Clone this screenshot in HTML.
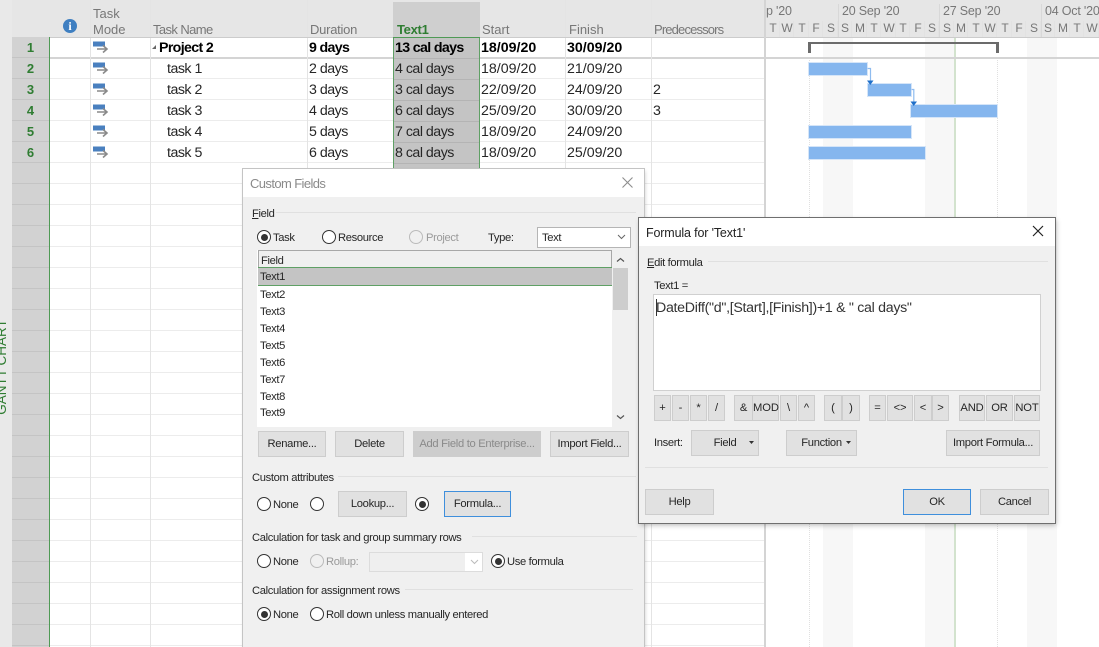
<!DOCTYPE html>
<html><head><meta charset="utf-8"><style>
html,body{margin:0;padding:0}
body{width:1099px;height:647px;overflow:hidden;position:relative;background:#fff;font-family:"Liberation Sans",sans-serif;color:#222;filter:blur(.3px)}
div,span{position:absolute;white-space:nowrap}
.h{font-size:13px;color:#777;line-height:15px}
.n{font-size:13px;font-weight:bold;color:#2f7d32;width:37px;text-align:center;left:12px;line-height:16px;margin-top:1px}
.g{font-size:14.2px;line-height:18px;color:#262626;margin-top:1px}
.x{letter-spacing:-.5px}
.b{font-weight:bold;color:#000}
.bx{letter-spacing:-.65px}
.d{font-size:12px;color:#777;top:21px;line-height:15px;width:14px;text-align:center}
.bar{background:#85b6ee;height:12px;box-shadow:0 0 0 1px #d5e5f8}
.l{font-size:11.2px;letter-spacing:-.35px;line-height:14px;color:#262626}
.gr{color:#9a9a9a}
.btn{background:#e1e1e1;border:1px solid #cdcdcd;box-sizing:border-box;font-size:11.2px;letter-spacing:-.3px;text-align:center;color:#262626}
.r{width:14px;height:14px;border:1px solid #333;border-radius:50%;background:#fff;box-sizing:border-box}
.r.on:after{content:"";position:absolute;left:2.500px;top:2.500px;width:7px;height:7px;border-radius:50%;background:#333}
.r.off{border-color:#bbb;background:#f0f0f0}
.sep{height:1px;background:#e0e0e0}
.m{top:395px;height:26px;line-height:24px;letter-spacing:-.1px}
</style></head><body>
<div style="left:0;top:0;width:1099px;height:37px;background:#e6e6e6"></div>
<div style="left:0;top:0;width:12px;height:647px;background:#e9e9e9"></div>
<div style="left:12px;top:37px;width:37px;height:610px;background:repeating-linear-gradient(#d2d2d2 0 20px,#c4c4c4 20px 21px)"></div>
<div style="left:49px;top:37px;width:1px;height:610px;background:#4f9a55"></div>
<div style="left:-48px;top:360px;width:100px;line-height:14px;height:14px;transform:rotate(-90deg);font-size:13.500px;color:#2f7d32;text-align:center">GANTT CHART</div>

<!-- grid rows -->
<div style="left:50px;top:37px;width:714px;height:610px;background:repeating-linear-gradient(#fff 0 20px,#ececec 20px 21px)"></div>
<div style="left:50px;top:57px;width:714px;height:2px;background:#d4d4d4"></div>
<div style="left:90px;top:0;width:1px;height:647px;background:#e4e4e4"></div>
<div style="left:150px;top:0;width:1px;height:647px;background:#e4e4e4"></div>
<div style="left:307px;top:0;width:1px;height:647px;background:#e4e4e4"></div>
<div style="left:565px;top:0;width:1px;height:647px;background:#e4e4e4"></div>
<div style="left:651px;top:0;width:1px;height:647px;background:#e4e4e4"></div>
<div style="left:50px;top:37px;width:714px;height:1px;background:#cccccc"></div>
<div style="left:393px;top:2px;width:87px;height:35px;background:#cfcfcf"></div>
<div style="left:393px;top:37px;width:87px;height:133px;background:repeating-linear-gradient(#c4c4c4 0 20px,#b4b4b4 20px 21px);box-sizing:border-box;border:1px solid #5fa065;border-bottom:0"></div>
<div style="left:393px;top:37px;width:87px;height:1px;background:#4f9a55"></div>

<!-- header -->
<div style="left:63px;top:19px;width:14px;height:14px;border-radius:50%;background:#3f7fc1;color:#fff;font:bold 12px/14px 'Liberation Serif',serif;text-align:center">i</div>
<div class="h" style="left:93px;top:6px">Task</div>
<div class="h" style="left:93px;top:22px">Mode</div>
<div class="h" style="left:153px;top:22px;letter-spacing:-.6px">Task Name</div>
<div class="h" style="left:310px;top:22px;letter-spacing:-.25px">Duration</div>
<div class="h" style="left:397px;top:22px;color:#2f7d32;font-weight:bold;letter-spacing:-.3px">Text1</div>
<div class="h" style="left:482px;top:22px">Start</div>
<div class="h" style="left:569px;top:22px">Finish</div>
<div class="h" style="left:654px;top:22px;letter-spacing:-.85px">Predecessors</div>

<!-- rows -->
<div class="n" style="top:39px">1</div><div class="n" style="top:60px">2</div><div class="n" style="top:81px">3</div><div class="n" style="top:102px">4</div><div class="n" style="top:123px">5</div><div class="n" style="top:144px">6</div>

<svg style="position:absolute;left:90px;top:38px" width="24" height="126" fill="none">
<g><rect x="3" y="3.500" width="12" height="5" fill="#4a80bf"/><path d="M7 11H16M13 7.500L17 11L13 14.500" stroke="#8a8a8a" stroke-width="1.600"/></g>
<g transform="translate(0,21)"><rect x="3" y="3.500" width="12" height="5" fill="#4a80bf"/><path d="M7 11H16M13 7.500L17 11L13 14.500" stroke="#8a8a8a" stroke-width="1.600"/></g>
<g transform="translate(0,42)"><rect x="3" y="3.500" width="12" height="5" fill="#4a80bf"/><path d="M7 11H16M13 7.500L17 11L13 14.500" stroke="#8a8a8a" stroke-width="1.600"/></g>
<g transform="translate(0,63)"><rect x="3" y="3.500" width="12" height="5" fill="#4a80bf"/><path d="M7 11H16M13 7.500L17 11L13 14.500" stroke="#8a8a8a" stroke-width="1.600"/></g>
<g transform="translate(0,84)"><rect x="3" y="3.500" width="12" height="5" fill="#4a80bf"/><path d="M7 11H16M13 7.500L17 11L13 14.500" stroke="#8a8a8a" stroke-width="1.600"/></g>
<g transform="translate(0,105)"><rect x="3" y="3.500" width="12" height="5" fill="#4a80bf"/><path d="M7 11H16M13 7.500L17 11L13 14.500" stroke="#8a8a8a" stroke-width="1.600"/></g>
</svg>
<svg style="position:absolute;left:151px;top:44px" width="6" height="6"><path d="M1 5H5V1Z" fill="#666"/></svg>

<div class="g b bx" style="left:159px;top:38px">Project 2</div>
<div class="g x" style="left:167px;top:59px">task 1</div>
<div class="g x" style="left:167px;top:80px">task 2</div>
<div class="g x" style="left:167px;top:101px">task 3</div>
<div class="g x" style="left:167px;top:122px">task 4</div>
<div class="g x" style="left:167px;top:143px">task 5</div>
<div class="g b bx" style="left:309px;top:38px">9 days</div>
<div class="g x" style="left:309px;top:59px">2 days</div>
<div class="g x" style="left:309px;top:80px">3 days</div>
<div class="g x" style="left:309px;top:101px">4 days</div>
<div class="g x" style="left:309px;top:122px">5 days</div>
<div class="g x" style="left:309px;top:143px">6 days</div>
<div class="g b bx" style="left:395px;top:38px">13 cal days</div>
<div class="g x" style="left:395px;top:59px">4 cal days</div>
<div class="g x" style="left:395px;top:80px">3 cal days</div>
<div class="g x" style="left:395px;top:101px">6 cal days</div>
<div class="g x" style="left:395px;top:122px">7 cal days</div>
<div class="g x" style="left:395px;top:143px">8 cal days</div>
<div class="g b" style="left:481px;top:38px">18/09/20</div>
<div class="g" style="left:481px;top:59px">18/09/20</div>
<div class="g" style="left:481px;top:80px">22/09/20</div>
<div class="g" style="left:481px;top:101px">25/09/20</div>
<div class="g" style="left:481px;top:122px">18/09/20</div>
<div class="g" style="left:481px;top:143px">18/09/20</div>
<div class="g b" style="left:567px;top:38px">30/09/20</div>
<div class="g" style="left:567px;top:59px">21/09/20</div>
<div class="g" style="left:567px;top:80px">24/09/20</div>
<div class="g" style="left:567px;top:101px">30/09/20</div>
<div class="g" style="left:567px;top:122px">24/09/20</div>
<div class="g" style="left:567px;top:143px">25/09/20</div>
<div class="g" style="left:653px;top:80px">2</div>
<div class="g" style="left:653px;top:101px">3</div>

<!-- gantt -->
<div style="left:764px;top:0;width:2px;height:647px;background:#d4d4d4"></div>
<div style="left:766px;top:37px;width:333px;height:610px;background:#fff"></div>
<div style="left:823px;top:38px;width:30px;height:609px;background:#f7f7f7"></div>
<div style="left:925px;top:38px;width:30px;height:609px;background:#f7f7f7"></div>
<div style="left:1027px;top:38px;width:30px;height:609px;background:#f7f7f7"></div>
<div style="left:954px;top:38px;width:1.500px;height:609px;background:#d3e3ce"></div>
<div style="left:809px;top:58px;width:0;height:589px;border-left:1px dotted #e0e0e0"></div>
<div style="left:997px;top:58px;width:0;height:589px;border-left:1px dotted #e0e0e0"></div>
<div style="left:766px;top:37px;width:333px;height:1px;background:#cccccc"></div>
<div style="left:766px;top:57px;width:333px;height:2px;background:#d4d4d4"></div>
<div class="h" style="left:766px;top:4px;font-size:12.500px;letter-spacing:-.2px">p '20</div>
<div class="h" style="left:842px;top:4px;font-size:12.500px;letter-spacing:-.2px">20 Sep '20</div>
<div class="h" style="left:943px;top:4px;font-size:12.500px;letter-spacing:-.2px">27 Sep '20</div>
<div class="h" style="left:1045px;top:4px;font-size:12.500px;letter-spacing:-.2px">04 Oct '20</div>
<div style="left:838px;top:4px;width:1px;height:33px;background:#d8d8d8"></div>
<div style="left:939px;top:4px;width:1px;height:33px;background:#d8d8d8"></div>
<div style="left:1041px;top:4px;width:1px;height:33px;background:#d8d8d8"></div>
<div style="left:765px;top:21px;width:334px;height:16px;background:repeating-linear-gradient(90deg,transparent 0 14px,#dedede 14px 14.500px)"></div>
<div class="d" style="left:766px">T</div><div class="d" style="left:780px">W</div><div class="d" style="left:795px">T</div><div class="d" style="left:809px">F</div><div class="d" style="left:824px">S</div><div class="d" style="left:838px">S</div><div class="d" style="left:853px">M</div><div class="d" style="left:867px">T</div><div class="d" style="left:882px">W</div><div class="d" style="left:896px">T</div><div class="d" style="left:911px">F</div><div class="d" style="left:925px">S</div><div class="d" style="left:940px">S</div><div class="d" style="left:954px">M</div><div class="d" style="left:969px">T</div><div class="d" style="left:983px">W</div><div class="d" style="left:998px">T</div><div class="d" style="left:1012px">F</div><div class="d" style="left:1027px">S</div><div class="d" style="left:1041px">S</div><div class="d" style="left:1056px">M</div><div class="d" style="left:1070px">T</div><div class="d" style="left:1085px">W</div>

<div style="left:808px;top:42px;width:191px;height:2px;background:#6b6b6b"></div>
<div style="left:808px;top:42px;width:3px;height:11px;background:#6b6b6b"></div>
<div style="left:996px;top:42px;width:3px;height:11px;background:#6b6b6b"></div>
<div class="bar" style="left:809px;top:62.500px;width:58px"></div>
<div class="bar" style="left:867.500px;top:83.500px;width:43.500px"></div>
<div class="bar" style="left:911px;top:104.500px;width:86px"></div>
<div class="bar" style="left:809px;top:125.500px;width:102px"></div>
<div class="bar" style="left:809px;top:146.500px;width:116px"></div>
<svg style="position:absolute;left:860px;top:60px" width="62" height="50" fill="none">
<path d="M7.500 8.500H10.500V21" stroke="#8fbcef" stroke-width="1.200"/><path d="M7 20.500H13.500L10.300 25Z" fill="#1f6fc9"/>
<path d="M51.500 29.500H53.800V42" stroke="#8fbcef" stroke-width="1.200"/><path d="M50.500 41.500H57L53.700 46Z" fill="#1f6fc9"/>
</svg>

<!-- Custom fields dialog -->
<div style="left:243px;top:169px;width:401px;height:478px;background:#f0f0f0;box-shadow:0 0 0 1px #c4c4c4,1px 2px 4px rgba(0,0,0,.2)"></div>
<div style="left:243px;top:169px;width:401px;height:28px;background:#fff"></div>
<div style="left:250px;top:176px;font-size:13px;letter-spacing:-.6px;line-height:16px;color:#8a8a8a">Custom Fields</div>
<svg style="position:absolute;left:621px;top:176px" width="13" height="13"><path d="M1.500 1.500L11.500 11.500M11.500 1.500L1.500 11.500" stroke="#8d8d8d" stroke-width="1.100"/></svg>

<div class="l" style="left:252px;top:207px"><u>F</u>ield</div>
<div class="sep" style="left:276px;top:212px;width:360px"></div>
<div class="r on" style="left:257px;top:230px"></div><div class="l" style="left:273px;top:231px">Task</div>
<div class="r" style="left:322px;top:230px"></div><div class="l" style="left:338px;top:231px">Resource</div>
<div class="r off" style="left:409px;top:230px"></div><div class="l gr" style="left:426px;top:231px">Project</div>
<div class="l" style="left:488px;top:231px">Type:</div>
<div style="left:537px;top:227px;width:92px;height:19px;background:#fff;border:1px solid #b5b5b5"></div>
<div class="l" style="left:542px;top:231px">Text</div>
<svg style="position:absolute;left:617px;top:234px" width="9" height="6" fill="none"><path d="M1 1L4.500 4.500L8 1" stroke="#666"/></svg>

<div style="left:257px;top:250px;width:372px;height:177px;background:#fff"></div>
<div style="left:258px;top:250px;width:354px;height:17px;background:#f0f0f0;border:1px solid #a8a8a8;border-bottom:0;box-sizing:border-box"></div>
<div style="left:612px;top:250px;width:17px;height:177px;background:#f0f0f0"></div>
<div style="left:613px;top:268px;width:15px;height:42px;background:#cdcdcd"></div>
<svg style="position:absolute;left:615px;top:256px" width="11" height="166" fill="none"><path d="M2 5.500L5.500 2.500L9 5.500M2 159.500L5.500 162.500L9 159.500" stroke="#555" stroke-width="1.200"/></svg>
<div class="l" style="left:261px;top:254px">Field</div>
<div style="left:258px;top:267px;width:354px;height:19px;background:#c4c4c4;border-top:1px solid #5fa065;border-bottom:1px solid #5fa065;box-sizing:border-box"></div>
<div class="l" style="left:260px;top:270px">Text1</div>
<div class="l" style="left:260px;top:288px">Text2</div>
<div class="l" style="left:260px;top:305px">Text3</div>
<div class="l" style="left:260px;top:322px">Text4</div>
<div class="l" style="left:260px;top:339px">Text5</div>
<div class="l" style="left:260px;top:356px">Text6</div>
<div class="l" style="left:260px;top:373px">Text7</div>
<div class="l" style="left:260px;top:390px">Text8</div>
<div class="l" style="left:260px;top:406px">Text9</div>

<div class="btn" style="left:258px;top:431px;width:68px;height:26px;line-height:24px">Rename...</div>
<div class="btn" style="left:335px;top:431px;width:69px;height:26px;line-height:24px">Delete</div>
<div class="btn" style="left:413px;top:431px;width:128px;height:26px;line-height:24px;background:#cdcdcd;color:#8a8a8a;border-color:#cdcdcd">Add Field to Enterprise...</div>
<div class="btn" style="left:550px;top:431px;width:79px;height:26px;line-height:24px">Import Field...</div>

<div class="l" style="left:252px;top:471px">Custom attributes</div>
<div class="sep" style="left:338px;top:476px;width:298px"></div>
<div class="r" style="left:257px;top:497px"></div><div class="l" style="left:273px;top:498px">None</div>
<div class="r" style="left:310px;top:497px"></div>
<div class="btn" style="left:338px;top:491px;width:69px;height:26px;line-height:25px">Lookup...</div>
<div class="r on" style="left:415px;top:497px"></div>
<div class="btn" style="left:444px;top:491px;width:67px;height:26px;line-height:25px;border-color:#3f8fdc">Formula...</div>

<div class="l" style="left:252px;top:531px">Calculation for task and group summary rows</div>
<div class="sep" style="left:472px;top:536px;width:165px"></div>
<div class="r" style="left:257px;top:554px"></div><div class="l" style="left:273px;top:555px">None</div>
<div class="r off" style="left:310px;top:554px"></div><div class="l gr" style="left:326px;top:555px">Rollup:</div>
<div style="left:369px;top:552px;width:114px;height:20px;background:#efefef;border:1px solid #dcdcdc;box-sizing:border-box"></div>
<div style="left:465px;top:553px;width:17px;height:18px;background:#fff"></div>
<svg style="position:absolute;left:470px;top:559px" width="9" height="6" fill="none"><path d="M1 1L4.500 4.500L8 1" stroke="#bbb"/></svg>
<div class="r on" style="left:491px;top:554px"></div><div class="l" style="left:507px;top:555px">Use formula</div>

<div class="l" style="left:252px;top:584px">Calculation for assignment rows</div>
<div class="sep" style="left:405px;top:589px;width:228px"></div>
<div class="r on" style="left:257px;top:607px"></div><div class="l" style="left:273px;top:608px">None</div>
<div class="r" style="left:310px;top:607px"></div><div class="l" style="left:326px;top:608px">Roll down unless manually entered</div>

<!-- Formula dialog -->
<div style="left:639px;top:218px;width:416px;height:305px;background:#f0f0f0;box-shadow:0 0 0 1px #6f6f6f,1px 2px 5px rgba(0,0,0,.3)"></div>
<div style="left:639px;top:218px;width:416px;height:28px;background:#fff"></div>
<div style="left:646px;top:225px;font-size:12.500px;letter-spacing:-.15px;line-height:15px;color:#222;margin-top:1px">Formula for 'Text1'</div>
<svg style="position:absolute;left:1032px;top:225px" width="12" height="12"><path d="M1 1L11 11M11 1L1 11" stroke="#222" stroke-width="1.200"/></svg>
<div class="l" style="left:647px;top:256px"><u>E</u>dit formula</div>
<div class="sep" style="left:708px;top:261px;width:340px"></div>
<div class="l" style="left:654px;top:279px">Text1 =</div>
<div style="left:653px;top:294px;width:388px;height:97px;background:#fff;border:1px solid #d0d0d0;box-sizing:border-box"></div>
<div style="left:656px;top:300px;font-size:14.200px;letter-spacing:-.3px;line-height:16px;color:#333">DateDiff("d",[Start],[Finish])+1 &amp; " cal days"</div>
<div style="left:656px;top:299px;width:1px;height:17px;background:#333"></div>

<div class="btn m" style="left:654px;width:17px">+</div>
<div class="btn m" style="left:672px;width:17px">-</div>
<div class="btn m" style="left:690px;width:17px">*</div>
<div class="btn m" style="left:708px;width:17px">/</div>
<div class="btn m" style="left:734px;width:19px">&amp;</div>
<div class="btn m" style="left:752px;width:27px">MOD</div>
<div class="btn m" style="left:780px;width:17px">\</div>
<div class="btn m" style="left:798px;width:17px">^</div>
<div class="btn m" style="left:824px;width:18px">(</div>
<div class="btn m" style="left:842px;width:18px">)</div>
<div class="btn m" style="left:869px;width:17px">=</div>
<div class="btn m" style="left:887px;width:26px">&lt;&gt;</div>
<div class="btn m" style="left:914px;width:18px">&lt;</div>
<div class="btn m" style="left:932px;width:17px">&gt;</div>
<div class="btn m" style="left:959px;width:26px">AND</div>
<div class="btn m" style="left:986px;width:27px">OR</div>
<div class="btn m" style="left:1014px;width:26px">NOT</div>

<div class="l" style="left:654px;top:436px">Insert:</div>
<div class="btn" style="left:691px;top:430px;width:68px;height:26px;line-height:25px">Field</div>
<svg style="position:absolute;left:749px;top:441px" width="6" height="4"><path d="M0 0H5L2.500 3Z" fill="#333"/></svg>
<div class="btn" style="left:786px;top:430px;width:71px;height:26px;line-height:25px">Function</div>
<svg style="position:absolute;left:846px;top:441px" width="6" height="4"><path d="M0 0H5L2.500 3Z" fill="#333"/></svg>
<div class="btn" style="left:946px;top:430px;width:94px;height:26px;line-height:25px">Import Formula...</div>
<div class="sep" style="left:645px;top:467px;width:403px"></div>
<div class="btn" style="left:645px;top:489px;width:69px;height:26px;line-height:25px">Help</div>
<div class="btn" style="left:903px;top:489px;width:68px;height:26px;line-height:25px;border-color:#3f8fdc">OK</div>
<div class="btn" style="left:980px;top:489px;width:69px;height:26px;line-height:25px">Cancel</div>
</body></html>
